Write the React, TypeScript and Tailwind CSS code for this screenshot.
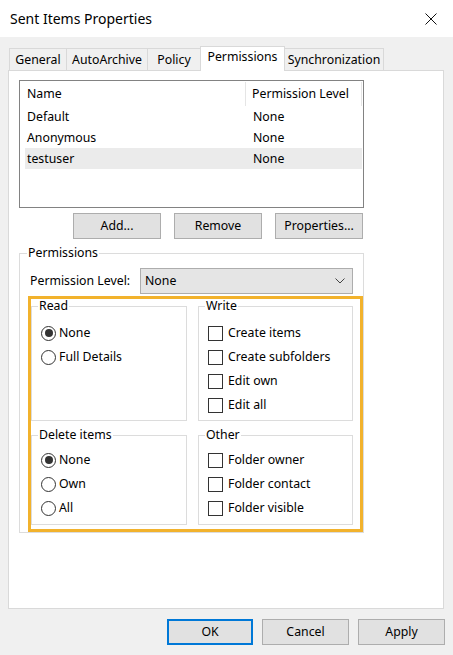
import React from "react";

const tabs = ["General", "AutoArchive", "Policy", "Permissions", "Synchronization"];
const tabWidths: Record<string, string> = {
  General: "w-[58px]",
  AutoArchive: "w-[82px]",
  Policy: "w-[54px]",
  Permissions: "w-[85px]",
  Synchronization: "w-[100px]",
};

const users = [
  { name: "Default", level: "None" },
  { name: "Anonymous", level: "None" },
  { name: "testuser", level: "None", selected: true },
];

const Radio = ({ checked, label }: { checked?: boolean; label: string }) => (
  <div className="h-[24px] flex items-center gap-[3px]">
    <span className="w-[15px] h-[15px] rounded-full border border-[#333] bg-white flex items-center justify-center">
      {checked && <span className="w-[8px] h-[8px] rounded-full bg-[#333]" />}
    </span>
    <span>{label}</span>
  </div>
);

const Check = ({ label }: { label: string }) => (
  <div className="h-[24px] flex items-center gap-[5px]">
    <span className="w-[15px] h-[15px] border border-[#333] bg-white" />
    <span>{label}</span>
  </div>
);

const Group = ({
  title,
  height,
  pad,
  children,
}: {
  title: string;
  height: string;
  pad: string;
  children: React.ReactNode;
}) => (
  <fieldset className={`border border-[#dcdcdc] ${height} min-w-0`}>
    <legend className="ml-[6px] px-[1px] leading-[14px]">{title}</legend>
    <div className={pad}>{children}</div>
  </fieldset>
);

export default function App() {
  return (
    <div className="w-[453px] h-[655px] bg-[#f0f0f0] flex flex-col text-[12.3px] text-black font-['Noto_Sans',sans-serif]">
      {/* title bar */}
      <div className="h-[37px] bg-white flex items-center justify-between pl-[10px] pr-[16px]">
        <span className="text-[14px]">Sent Items Properties</span>
        <svg width="12" height="12" viewBox="0 0 12 12">
          <path d="M0.5 0.5 L11.5 11.5 M11.5 0.5 L0.5 11.5" stroke="#111" strokeWidth="1" />
        </svg>
      </div>

      {/* tabs */}
      <div className="h-[33px] flex items-end pl-[9px]">
        {tabs.map((t, i) => {
          const active = t === "Permissions";
          return (
            <div
              key={t}
              className={`${tabWidths[t]} ${i > 0 ? "-ml-px" : ""} flex items-center justify-center border border-b-0 border-[#d9d9d9] ${
                active ? "h-[25px] bg-white -mb-px relative z-10 pb-[3px]" : "h-[22px] bg-[#f0f0f0] pt-[1px]"
              }`}
            >
              {t}
            </div>
          );
        })}
      </div>

      {/* panel */}
      <div className="ml-[8px] w-[436px] h-[539px] border border-[#d9d9d9] bg-white pt-[9px] pl-[10px]">
        {/* list */}
        <div className="w-[345px] h-[128px] border border-[#828282]">
          <div className="h-[25px] flex pt-[1px]">
            <div className="w-[226px] pl-[7px] flex items-center border-r border-[#e5e5e5]">Name</div>
            <div className="w-[116px] pl-[6px] flex items-center border-r border-[#e5e5e5]">Permission Level</div>
          </div>
          {users.map((u) => (
            <div
              key={u.name}
              className={`ml-[5px] w-[337px] h-[21px] flex items-center pt-[1px] ${u.selected ? "bg-[#ebebeb]" : ""}`}
            >
              <div className="w-[221px] pl-[2px]">{u.name}</div>
              <div className="pl-[7px]">{u.level}</div>
            </div>
          ))}
        </div>

        {/* list buttons */}
        <div className="w-[344px] mt-[5px] flex justify-end gap-[13px]">
          {["Add...", "Remove", "Properties..."].map((b) => (
            <div
              key={b}
              className="w-[88px] h-[26px] bg-[#e1e1e1] border border-[#adadad] flex items-center justify-center"
            >
              {b}
            </div>
          ))}
        </div>

        {/* permissions group */}
        <fieldset className="mt-[6px] w-[345px] border border-[#dcdcdc] min-w-0">
          <legend className="ml-[7px] px-[1px] leading-[16px]">Permissions</legend>
          <div className="mt-[7px] flex items-center">
            <div className="w-[120px] pl-[10px]">Permission Level:</div>
            <div className="w-[213px] h-[26px] bg-[#e5e5e5] border border-[#adadad] flex items-center justify-between pl-[4px] pr-[7px]">
              <span>None</span>
              <svg width="10" height="6" viewBox="0 0 10 6">
                <path d="M0.5 0.5 L5 5 L9.5 0.5" fill="none" stroke="#444" strokeWidth="1" />
              </svg>
            </div>
          </div>

          <div className="mt-[2px] ml-[8px] w-[335px] h-[236px] border-[3px] border-[#f2b22c] grid grid-cols-[156px_155px] gap-x-[11px] content-start gap-y-[7px]">
            <Group title="Read" height="h-[122px]" pad="pt-[8px] pl-[9px]">
              <Radio checked label="None" />
              <Radio label="Full Details" />
            </Group>
            <Group title="Write" height="h-[122px]" pad="pt-[8px] pl-[9px]">
              <Check label="Create items" />
              <Check label="Create subfolders" />
              <Check label="Edit own" />
              <Check label="Edit all" />
            </Group>
            <Group title="Delete items" height="h-[97px]" pad="pt-[6px] pl-[9px]">
              <Radio checked label="None" />
              <Radio label="Own" />
              <Radio label="All" />
            </Group>
            <Group title="Other" height="h-[97px]" pad="pt-[6px] pl-[9px]">
              <Check label="Folder owner" />
              <Check label="Folder contact" />
              <Check label="Folder visible" />
            </Group>
          </div>
        </fieldset>
      </div>

      {/* dialog buttons */}
      <div className="mt-[10px] flex justify-end gap-[9px] pr-[8px]">
        <div className="w-[86px] h-[26px] bg-[#e1e1e1] border-2 border-[#0078d7] flex items-center justify-center">OK</div>
        <div className="w-[87px] h-[26px] bg-[#e1e1e1] border border-[#adadad] flex items-center justify-center">Cancel</div>
        <div className="w-[87px] h-[26px] bg-[#e1e1e1] border border-[#adadad] flex items-center justify-center">Apply</div>
      </div>
    </div>
  );
}
